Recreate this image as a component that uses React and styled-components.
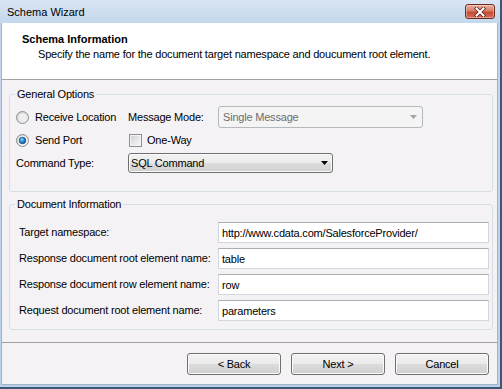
import React from "react";
import styled, { createGlobalStyle } from "styled-components";

const GlobalStyle = createGlobalStyle`
  html, body {
    margin: 0;
    padding: 0;
  }
  body {
    font-family: "Liberation Sans", Arial, sans-serif;
    font-size: 11px;
    letter-spacing: -0.2px;
    color: #000;
  }
`;

const Window = styled.div`
  width: 502px;
  height: 389px;
  box-sizing: border-box;
  display: flex;
  flex-direction: column;
  background: linear-gradient(#d9e5f3 0px, #c4d7ec 23px, #bbd1ea 100%);
  padding: 0 2px 2px 1px;
  border-right: 2px solid #3d5876;
  border-bottom: 2px solid #3d5876;
`;

const TitleBar = styled.div`
  height: 23px;
  flex: none;
  display: flex;
  align-items: center;
  justify-content: space-between;
  padding: 0 3px 0 6px;
`;

const TitleText = styled.span`
  font-size: 11px;
  letter-spacing: 0;
  line-height: 13px;
  padding-top: 2px;
`;

const CloseButton = styled.span`
  width: 30px;
  height: 15px;
  box-sizing: border-box;
  display: flex;
  align-items: center;
  justify-content: center;
  border: 1px solid #6e2b22;
  border-radius: 3px;
  background: linear-gradient(#eab0a1 0%, #d77e68 45%, #c54a30 55%, #d47258 100%);
  box-shadow: inset 0 0 0 1px rgba(255, 255, 255, 0.35);
`;

const Client = styled.div`
  flex: 1;
  display: flex;
  flex-direction: column;
  border: 1px solid #9fb3c9;
  border-top: none;
  background: #f5f2f5;
`;

const Header = styled.div`
  height: 57px;
  box-sizing: border-box;
  flex: none;
  background: #fff;
  border-bottom: 1px solid #a0a0a0;
  padding: 10px 0 0 20px;
  display: flex;
  flex-direction: column;
  gap: 2px;
`;

const HeaderTitle = styled.div`
  font-weight: bold;
  letter-spacing: 0;
  line-height: 13px;
`;

const HeaderText = styled.div`
  line-height: 13px;
  padding-left: 16px;
`;

const Body = styled.div`
  flex: 1;
  display: flex;
  flex-direction: column;
  gap: 6px;
  padding: 8px 4px 0 7px;
`;

const Group = styled.fieldset`
  margin: 0;
  padding: 0;
  min-width: 0;
  border: 1px solid #d5dfe5;
  border-radius: 3px;
`;

const Legend = styled.legend`
  margin-left: 5px;
  padding: 0 2px;
  line-height: 13px;
`;

const OptionsGrid = styled.div`
  display: grid;
  grid-template-columns: 112px 90px 205px;
  grid-auto-rows: 22px;
  row-gap: 1px;
  align-items: center;
  padding: 5px 0 17px 6px;
`;

const DocGrid = styled.div`
  display: grid;
  grid-template-columns: 199px 1fr;
  grid-auto-rows: 21px;
  row-gap: 5px;
  align-items: center;
  padding: 11px 3px 8px 9px;
`;

const Choice = styled.label`
  display: flex;
  align-items: center;
  gap: ${(p) => p.$gap || 6}px;
  margin-left: ${(p) => p.$indent || 0}px;
  grid-column: ${(p) => p.$span || "auto"};
  white-space: nowrap;
`;

const Label = styled.span`
  white-space: nowrap;
  line-height: 13px;
`;

const Select = styled.div`
  width: 205px;
  height: ${(p) => (p.$disabled ? 22 : 20)}px;
  box-sizing: border-box;
  display: flex;
  align-items: center;
  justify-content: space-between;
  padding: 0 ${(p) => (p.$disabled ? 5 : 4)}px 0 ${(p) => (p.$disabled ? 4 : 2)}px;
  border: 1px solid ${(p) => (p.$disabled ? "#b5b9bc" : "#707070")};
  border-radius: 3px;
  color: ${(p) => (p.$disabled ? "#6d6d6d" : "#000")};
  background: ${(p) =>
    p.$disabled
      ? "#f4f4f4"
      : "linear-gradient(#f2f2f2 0%, #ebebeb 50%, #dddddd 50%, #cfcfcf 100%)"};
  box-shadow: ${(p) => (p.$disabled ? "none" : "inset 0 0 0 1px #fbfbfb")};
  grid-column: ${(p) => p.$span || "auto"};
  justify-self: start;
`;

const CheckBox = styled.span`
  width: 13px;
  height: 13px;
  box-sizing: border-box;
  border: 1px solid #8e8f8f;
  background: linear-gradient(135deg, #cdd0d5 0%, #e8e9eb 60%, #f7f7f7 100%);
  box-shadow: inset 0 0 0 1px #f4f4f4;
`;

const TextBox = styled.div`
  height: 21px;
  box-sizing: border-box;
  display: flex;
  align-items: center;
  padding-left: 3px;
  background: #fff;
  border: 1px solid #d3d6dc;
  border-top-color: #abadb3;
  white-space: nowrap;
  overflow: hidden;
`;

const Footer = styled.div`
  flex: none;
  height: 31px;
  display: flex;
  justify-content: flex-end;
  gap: 10px;
  padding: 10px 8px 0 0;
  border-top: 1px solid #a0a0a0;
`;

const Button = styled.button`
  width: 94px;
  height: 22px;
  margin: 0;
  padding: 0;
  font-family: "Liberation Sans", Arial, sans-serif;
  font-size: 11px;
  letter-spacing: -0.2px;
  color: #000;
  border: 1px solid #707070;
  border-radius: 3px;
  background: linear-gradient(#f2f2f2 0%, #ebebeb 50%, #dddddd 50%, #cfcfcf 100%);
  box-shadow: inset 0 0 0 1px #fbfbfb;
`;

const Radio = ({ checked, id }) => (
  <svg width="13" height="13" viewBox="0 0 13 13">
    <defs>
      <linearGradient id={`ring-${id}`} x1="0" y1="0" x2="1" y2="1">
        <stop offset="0" stopColor="#c9cbcd" />
        <stop offset="1" stopColor="#f6f6f6" />
      </linearGradient>
      <radialGradient id={`dot-${id}`} cx="0.4" cy="0.35" r="0.7">
        <stop offset="0" stopColor="#8fd4fb" />
        <stop offset="0.5" stopColor="#2a8ad4" />
        <stop offset="1" stopColor="#0d4e8d" />
      </radialGradient>
    </defs>
    <circle cx="6.5" cy="6.5" r="6" fill={`url(#ring-${id})`} stroke="#8e8f8f" />
    {checked ? (
      <>
        <circle cx="6.5" cy="6.5" r="4.5" fill="#fbfbfb" />
        <circle cx="6.5" cy="6.5" r="3.3" fill={`url(#dot-${id})`} stroke="#174f82" strokeWidth="0.8" />
      </>
    ) : (
      <circle cx="6.5" cy="6.5" r="4" fill="#eeeeee" />
    )}
  </svg>
);

const Arrow = ({ color }) => (
  <svg width="7" height="4" viewBox="0 0 7 4">
    <path d="M0 0 H7 L3.5 4 Z" fill={color} />
  </svg>
);

const docRows = [
  ["Target namespace:", "http://www.cdata.com/SalesforceProvider/"],
  ["Response document root element name:", "table"],
  ["Response document row element name:", "row"],
  ["Request document root element name:", "parameters"],
];

export default function App() {
  return (
    <>
      <GlobalStyle />
      <Window>
        <TitleBar>
          <TitleText>Schema Wizard</TitleText>
          <CloseButton>
            <svg width="12" height="10" viewBox="0 0 12 10">
              <path d="M2.5 1.5 L9.5 8.5 M9.5 1.5 L2.5 8.5" stroke="#5b2219" strokeWidth="3.6" strokeLinecap="square" />
              <path d="M2.5 1.5 L9.5 8.5 M9.5 1.5 L2.5 8.5" stroke="#fff" strokeWidth="2" strokeLinecap="square" />
            </svg>
          </CloseButton>
        </TitleBar>
        <Client>
          <Header>
            <HeaderTitle>Schema Information</HeaderTitle>
            <HeaderText>
              Specify the name for the document target namespace and doucument root element.
            </HeaderText>
          </Header>
          <Body>
            <Group>
              <Legend>General Options</Legend>
              <OptionsGrid>
                <Choice>
                  <Radio id="recv" />
                  <Label>Receive Location</Label>
                </Choice>
                <Label>Message Mode:</Label>
                <Select $disabled>
                  <span>Single Message</span>
                  <Arrow color="#a3a3a3" />
                </Select>
                <Choice>
                  <Radio id="send" checked />
                  <Label>Send Port</Label>
                </Choice>
                <Choice $span="2 / 4" $indent={1} $gap={5}>
                  <CheckBox />
                  <Label>One-Way</Label>
                </Choice>
                <Label>Command Type:</Label>
                <Select $span="2 / 4">
                  <span>SQL Command</span>
                  <Arrow color="#000" />
                </Select>
              </OptionsGrid>
            </Group>
            <Group>
              <Legend>Document Information</Legend>
              <DocGrid>
                {docRows.map(([label, value]) => (
                  <React.Fragment key={label}>
                    <Label>{label}</Label>
                    <TextBox>{value}</TextBox>
                  </React.Fragment>
                ))}
              </DocGrid>
            </Group>
          </Body>
          <Footer>
            <Button>&lt; Back</Button>
            <Button>Next &gt;</Button>
            <Button>Cancel</Button>
          </Footer>
        </Client>
      </Window>
    </>
  );
}
